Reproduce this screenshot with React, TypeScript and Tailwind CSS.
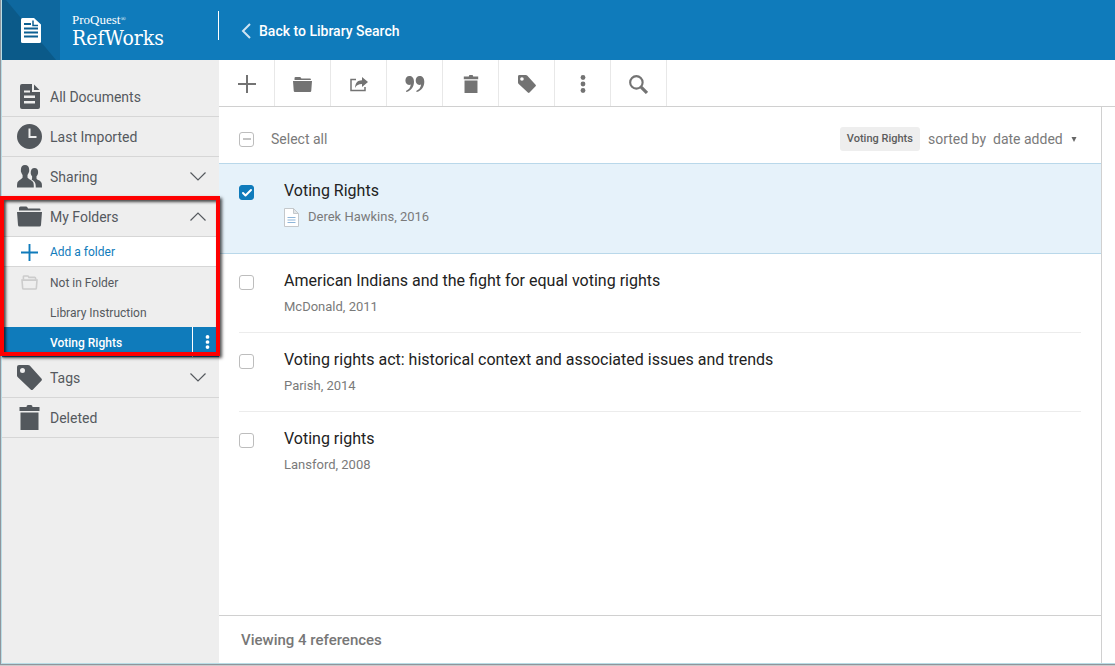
import type { InputHTMLAttributes, ReactNode } from "react";
import { Check } from "lucide-react";

/* ---------- icons ---------- */

interface IconProps {
  className?: string;
}

function DocumentIcon({ className }: IconProps) {
  return (
    <svg viewBox="0 0 25 25" className={className} fill="currentColor" aria-hidden="true">
      <path
        fillRule="evenodd"
        d="M5 0h10v8h8v15a2 2 0 0 1-2 2H5a2 2 0 0 1-2-2V2a2 2 0 0 1 2-2ZM7 6.500v2h6v-2ZM7 11.500v2.500h11v-2.500ZM7 17v2.500h11V17Z"
      />
      <path d="M17 0.500V6h5.500Z" />
    </svg>
  );
}

function ClockIcon({ className }: IconProps) {
  return (
    <svg viewBox="0 0 25 25" className={className} fill="currentColor" aria-hidden="true">
      <path
        fillRule="evenodd"
        d="M12.500 0a12.500 12.500 0 1 0 0 25 12.500 12.500 0 0 0 0-25ZM11.500 4.500h2V12h6v2h-8Z"
      />
    </svg>
  );
}

function PeopleIcon({ className }: IconProps) {
  return (
    <svg viewBox="0 0 25 25" className={className} fill="currentColor" aria-hidden="true">
      <path d="M8 1c2.700 0 4.200 1.900 4.200 4.700 0 1 .1 1.600-.3 2.600-.4 1.200-1 2-1.400 2.700v2.500c.3 1.500 5.500 2.600 6 5.500.3 1.300.3 2.800.3 4.500H0c0-1.700 0-3.200.3-4.500.5-2.900 5-4 5.300-5.500V11c-.6-.7-1-1.500-1.400-2.700-.4-1-.3-1.600-.3-2.600C3.900 2.900 5.300 1 8 1Z" />
      <path d="M17.600 4c2.200 0 3.500 1.600 3.500 3.900 0 2-.6 3.300-1.600 4.400v2.300c.3 1.400 4.500 2 5.100 4.500.4 1.500.4 2.700.4 4.400h-6.200c0-3.500-.3-5.900-3.500-7.600-.9-.5-.6-.9-.2-1.500v-2.200c-.6-.7-1.200-1.600-1.400-3C13.600 5.900 15 4 17.600 4Z" />
    </svg>
  );
}

function FolderIcon({ className }: IconProps) {
  return (
    <svg viewBox="0 0 25 25" className={className} fill="currentColor" aria-hidden="true">
      <path d="M2 6.500V4q0-1.500 1.500-1.500h5.500q1 0 1.500 1l.5 1h11.500q1 0 1 1v1Z" />
      <path d="M0 8h25l-1 13q-.1 1.500-1.500 1.500h-20Q1.100 22.500 1 21Z" />
    </svg>
  );
}

function FolderOutlineIcon({ className }: IconProps) {
  return (
    <svg viewBox="0 0 18 16" className={className} fill="none" stroke="currentColor" strokeWidth="1.700" aria-hidden="true">
      <path d="M1 5.500h16l-.7 8.500q-.1 1-1 1H2.700q-.9 0-1-1Z" />
      <path d="M2.500 5V2q0-1 1-1H7q.7 0 1 .7l.4.8h6.100q1 0 1 1V5" />
    </svg>
  );
}

function TrashIcon({ className }: IconProps) {
  return (
    <svg viewBox="0 0 25 25" className={className} fill="currentColor" aria-hidden="true">
      <path d="M2.500 2h7Q9.500 0 11 0h3q1.500 0 1.500 2h7v4h-20ZM3.500 7.500h18V25h-18Z" />
    </svg>
  );
}

function TagIcon({ className }: IconProps) {
  return (
    <svg viewBox="0 0 25 25" className={className} fill="currentColor" aria-hidden="true">
      <path
        fillRule="evenodd"
        d="M2 0h9q1 0 1.700.6L24.400 13.500q1 1.200 0 2.200L16 24.400q-1.200 1-2.300 0L.6 12Q0 11.400 0 10.500V2Q0 0 2 0ZM5.500 3a2.500 2.500 0 1 0 0 5 2.500 2.500 0 0 0 0-5Z"
      />
    </svg>
  );
}

function PlusIcon({ className }: IconProps) {
  return (
    <svg viewBox="0 0 18 18" className={className} fill="none" stroke="currentColor" strokeWidth="2" aria-hidden="true">
      <path d="M9 0v18M0 9h18" />
    </svg>
  );
}

function ShareIcon({ className }: IconProps) {
  return (
    <svg viewBox="0 0 18 18" className={className} aria-hidden="true">
      <path d="M6 4.500H1v11h14V12" fill="none" stroke="currentColor" strokeWidth="1.500" />
      <path d="M12 2v3.300C7.500 5.300 5.300 8 5 13c1.700-3 3.500-4 7-4v3l6-5Z" fill="currentColor" />
    </svg>
  );
}

function QuoteIcon({ className }: IconProps) {
  return (
    <svg viewBox="0 0 20 18" className={className} fill="currentColor" aria-hidden="true">
      <path d="M4.300 1C7 1 9 3 9 6.700c0 5-2.700 8.800-7.600 10.300L.9 16c2.800-1.300 4.600-3.500 4.900-6.500-.5.3-1 .4-1.700.4C1.800 9.900.4 8 .4 5.600.4 3 2 1 4.300 1Z" />
      <path d="M14.600 1c2.700 0 4.700 2 4.700 5.700 0 5-2.700 8.800-7.600 10.300l-.5-1c2.800-1.300 4.600-3.500 4.900-6.500-.5.3-1 .4-1.700.4-2.300 0-3.700-1.900-3.700-4.300C10.700 3 12.300 1 14.600 1Z" />
    </svg>
  );
}

function DotsIcon({ className }: IconProps) {
  return (
    <svg viewBox="0 0 6 18" className={className} fill="currentColor" aria-hidden="true">
      <circle cx="3" cy="2.500" r="2.400" />
      <circle cx="3" cy="9" r="2.400" />
      <circle cx="3" cy="15.500" r="2.400" />
    </svg>
  );
}

function SearchIcon({ className }: IconProps) {
  return (
    <svg viewBox="0 0 18 18" className={className} fill="none" stroke="currentColor" aria-hidden="true">
      <circle cx="7" cy="7" r="5.900" strokeWidth="2" />
      <path d="m11.500 11.500 5.500 5.500" strokeWidth="3" />
    </svg>
  );
}

function PageIcon({ className }: IconProps) {
  return (
    <svg viewBox="0 0 15 19" className={className} aria-hidden="true">
      <path d="M.5.500h9l5 5v13H.5Z" fill="#fff" stroke="#c4c8cb" />
      <path d="M9.500.500v5h5Z" fill="#e3e6e8" stroke="#c4c8cb" />
      <path d="M3.500 9.500h8M3.500 12h8M3.500 14.500h8" stroke="#8fb6d9" />
    </svg>
  );
}

function ChevronIcon({ up }: { up: boolean }) {
  return (
    <svg viewBox="0 0 16 9" className="h-[9px] w-4" fill="none" stroke="currentColor" strokeWidth="1.200" aria-hidden="true">
      <path d={up ? "M.5 8.500 8 1l7.500 7.500" : "M.5.500 8 8 15.500.500"} />
    </svg>
  );
}

/* ---------- small pieces ---------- */

function Checkbox({
  mark,
  ...props
}: InputHTMLAttributes<HTMLInputElement> & { mark?: ReactNode }) {
  return (
    <span className="grid size-[15px] shrink-0">
      <input
        type="checkbox"
        className="col-start-1 row-start-1 size-[15px] appearance-none rounded-[3px] border border-[#bdbdbd] bg-white checked:border-[#0f7bbb] checked:bg-[#0f7bbb]"
        {...props}
      />
      <span className="pointer-events-none col-start-1 row-start-1 grid place-items-center">{mark}</span>
    </span>
  );
}

interface NavRowProps {
  icon: ReactNode;
  label: string;
  chevron?: "up" | "down";
}

function NavRow({ icon, label, chevron }: NavRowProps) {
  return (
    <button className="flex h-10 w-full items-center gap-2 border-b border-[#d6d6d6] pl-[15px] pr-[13px] text-left text-sm text-[#55595e]">
      <span className="grid w-[25px] place-items-center text-[#53585d]">{icon}</span>
      <span className="flex-1">{label}</span>
      {chevron && <ChevronIcon up={chevron === "up"} />}
    </button>
  );
}

const TOOLS = [
  { label: "Add", icon: <PlusIcon className="size-[18px]" /> },
  { label: "Assign to folder", icon: <FolderIcon className="size-[19px]" /> },
  { label: "Share", icon: <ShareIcon className="size-[18px]" /> },
  { label: "Create bibliography", icon: <QuoteIcon className="h-[18px] w-5" /> },
  { label: "Delete", icon: <TrashIcon className="size-[18px]" /> },
  { label: "Tag", icon: <TagIcon className="size-[18px]" /> },
  { label: "More", icon: <DotsIcon className="h-[18px] w-1.5" /> },
  { label: "Search", icon: <SearchIcon className="size-[19px]" /> },
];

const REFERENCES = [
  { title: "American Indians and the fight for equal voting rights", meta: "McDonald, 2011" },
  { title: "Voting rights act: historical context and associated issues and trends", meta: "Parish, 2014" },
  { title: "Voting rights", meta: "Lansford, 2008" },
];

/* ---------- page sections ---------- */

function Header() {
  return (
    <header className="flex h-[60px] bg-[#0f7bbb] text-white">
      <div className="grid w-[58px] bg-[#0e689f]">
        <svg viewBox="0 0 58 60" className="col-start-1 row-start-1 h-[60px] w-[58px]" aria-hidden="true">
          <path d="M0 0h4l50 60H0Z" fill="#0b5a89" />
        </svg>
        <svg viewBox="0 0 20 25" className="col-start-1 row-start-1 h-[25px] w-5 place-self-center" aria-hidden="true">
          <path d="M1.500 0H13l7 6.500v17q0 1.500-1.500 1.500h-17Q0 25 0 23.500v-22Q0 0 1.500 0Z" fill="#fff" />
          <path d="M3 6h7M3 10.500h14M3 14.500h14M3 18.500h14" stroke="#0c5f92" strokeWidth="1.800" />
          <path d="M12 2.500v5h5" fill="none" stroke="#0c5f92" strokeWidth="1.500" />
        </svg>
      </div>
      <div className="w-[158px] pl-3 pt-3">
        <p className="font-['Liberation_Serif',serif] text-[13px] leading-4">
          ProQuest<sup className="text-[7px]">®</sup>
        </p>
        <p className="font-['DejaVu_Serif_Condensed','DejaVu_Serif',serif] text-[21px] leading-5">RefWorks</p>
      </div>
      <div className="mt-[11px] h-[29px] w-px bg-white" />
      <a href="#library" className="flex items-center gap-2 pl-[22px] pt-0.5 text-sm font-medium">
        <svg viewBox="0 0 10 16" className="h-4 w-2.5" fill="none" stroke="#cfe4f2" strokeWidth="2" aria-hidden="true">
          <path d="M9 1 2 8l7 7" />
        </svg>
        Back to Library Search
      </a>
    </header>
  );
}

function Sidebar() {
  return (
    <nav className="w-[217px] shrink-0 bg-[#eeeeee] pt-[17px]">
      <NavRow icon={<DocumentIcon className="size-[25px]" />} label="All Documents" />
      <NavRow icon={<ClockIcon className="size-[25px]" />} label="Last Imported" />
      <NavRow icon={<PeopleIcon className="size-[25px]" />} label="Sharing" chevron="down" />

      <section className="relative text-xs">
        <NavRow icon={<FolderIcon className="size-[25px]" />} label="My Folders" chevron="up" />
        <button className="flex h-[30px] w-full items-center gap-2 border-b border-[#d6d6d6] bg-white pl-[15px] pt-px text-[#0f7bbb]">
          <span className="grid w-[25px] place-items-center">
            <PlusIcon className="size-[17px]" />
          </span>
          Add a folder
        </button>
        <a href="#unfiled" className="flex h-[30px] items-center gap-2 pl-[15px] pt-px text-[#55595e]">
          <span className="grid w-[25px] place-items-center text-[#cccccc]">
            <FolderOutlineIcon className="h-[15px] w-[17px]" />
          </span>
          Not in Folder
        </a>
        <a href="#instruction" className="flex h-[30px] items-center pl-12 pt-px text-[#55595e]">
          Library Instruction
        </a>
        <div className="flex h-[30px] bg-[#0f7bbb] font-medium text-white">
          <a href="#voting" className="flex flex-1 items-center pl-12 pt-px">
            Voting Rights
          </a>
          <button className="grid w-[27px] place-items-center border-l border-white pl-0.5" aria-label="Folder options">
            <DotsIcon className="h-3.5 w-[5px]" />
          </button>
        </div>
        <div className="h-px bg-[#d6d6d6]" />
        {/* callout frame around the folder group */}
        <div className="pointer-events-none absolute -left-0.5 -right-px -top-px bottom-0.5 border-4 border-[#fe0000] shadow-[2px_2px_3px_#000000b0,inset_2px_2px_3px_#000000b0]" />
      </section>

      <NavRow icon={<TagIcon className="size-[25px]" />} label="Tags" chevron="down" />
      <NavRow icon={<TrashIcon className="size-[25px]" />} label="Deleted" />
    </nav>
  );
}

function Toolbar() {
  return (
    <div className="flex h-[47px] border-b border-[#d0d0d0] text-[#737373]">
      {TOOLS.map((tool) => (
        <button
          key={tool.label}
          aria-label={tool.label}
          className="grid w-14 place-items-center border-r border-[#e8e8e8] pt-0.5"
        >
          {tool.icon}
        </button>
      ))}
    </div>
  );
}

function ListHeader() {
  return (
    <div className="flex h-14 items-center pl-5 pr-6 pt-2 text-sm text-[#7a7a7a]">
      <label className="flex flex-1 items-center gap-[17px]">
        <Checkbox mark={<span className="h-0.5 w-2 bg-[#c4c4c4]" />} />
        Select all
      </label>
      <span className="mr-2 rounded-[3px] bg-[#eeeeee] px-[7px] py-1 text-[11px] font-medium leading-4 text-[#5c5c5c]">
        Voting Rights
      </span>
      <label htmlFor="sort" className="mr-[7px]">
        sorted by
      </label>
      <select id="sort" defaultValue="date added" className="appearance-none bg-transparent">
        <option>date added</option>
      </select>
      <svg viewBox="0 0 6 5" className="ml-2 h-[5px] w-1.5" fill="#666" aria-hidden="true">
        <path d="M.5 0h5L3 5Z" />
      </svg>
    </div>
  );
}

function ReferenceList() {
  return (
    <ul className="flex-1">
      <li className="flex h-[91px] gap-[30px] border-y border-[#b9d8ea] bg-[#e6f2fa] pl-5 pt-[21px]">
        <Checkbox
          aria-label="Select Voting Rights"
          defaultChecked
          mark={<Check className="size-3 text-white" strokeWidth={4} />}
        />
        <div className="-mt-1.5">
          <h2 className="text-base leading-6 text-[#222222]">Voting Rights</h2>
          <p className="mt-1 flex items-center gap-[9px] text-[13px] leading-5 text-[#7a7a7a]">
            <PageIcon className="h-[19px] w-[15px]" />
            Derek Hawkins, 2016
          </p>
        </div>
      </li>
      {REFERENCES.map((ref) => (
        <li
          key={ref.title}
          className="mx-5 flex h-[79px] gap-[30px] border-b border-[#ececec] pt-[21px] last:border-b-0"
        >
          <Checkbox aria-label={`Select ${ref.title}`} />
          <div className="-mt-1.5">
            <h2 className="text-base leading-6 text-[#222222]">{ref.title}</h2>
            <p className="mt-1 text-[13px] leading-5 text-[#7a7a7a]">{ref.meta}</p>
          </div>
        </li>
      ))}
    </ul>
  );
}

export default function App() {
  return (
    <div className="flex min-h-screen flex-col border-b border-[#cccccc] bg-white font-[Roboto,sans-serif]">
      <div className="flex flex-1 flex-col border-b border-l border-[#8f959c]">
        <div className="flex flex-1 flex-col border-b border-l border-[#b9dde6]">
          <Header />
          <div className="flex flex-1">
            <Sidebar />
            <main className="flex min-w-0 flex-1 flex-col">
              <Toolbar />
              <div className="mr-[13px] flex flex-1 flex-col border-r border-[#d0d0d0]">
                <ListHeader />
                <ReferenceList />
                <footer className="h-12 border-t border-[#d0d0d0] pl-[22px] pt-3.5 text-[15px] font-medium leading-5 text-[#777777]">
                  Viewing 4 references
                </footer>
              </div>
            </main>
          </div>
        </div>
      </div>
    </div>
  );
}
